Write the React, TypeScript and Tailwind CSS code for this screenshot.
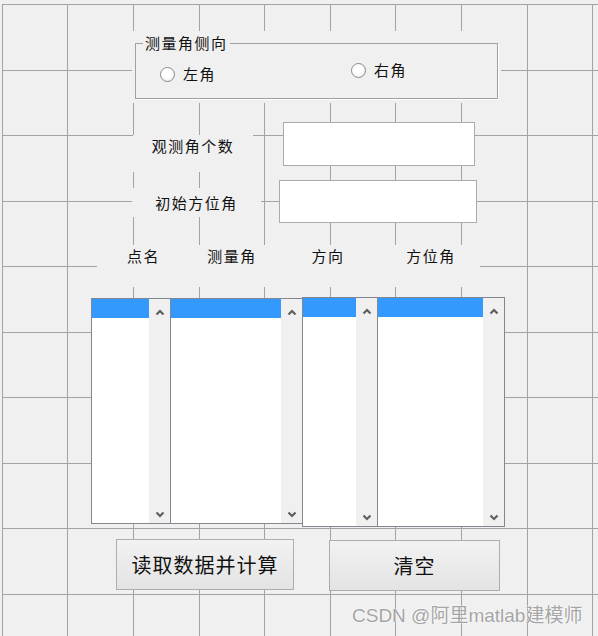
import React from "react";

const GRID_X = [2, 67, 133, 199, 264, 330, 395, 461, 527, 592];
const GRID_Y = [4, 70, 135, 201, 266, 332, 397, 463, 528, 594];

const CJK = "font-['Noto_Sans_CJK_SC','Noto_Sans',sans-serif]";
const LABEL = "text-[15px] leading-[18px] tracking-[1.5px] text-[#111]";

// GUIDE-style grid behind the controls
function GridBackground() {
  return (
    <svg className="absolute inset-0" width={598} height={636}>
      {GRID_X.map((x) => (
        <line key={"x" + x} x1={x + 0.5} y1={GRID_Y[0]} x2={x + 0.5} y2={636} stroke="#a3a3a3" strokeWidth={1} />
      ))}
      {GRID_Y.map((y) => (
        <line key={"y" + y} x1={GRID_X[0]} y1={y + 0.5} x2={598} y2={y + 0.5} stroke="#a3a3a3" strokeWidth={1} />
      ))}
    </svg>
  );
}

function Radio({ label }: { label: string }) {
  return (
    <div className="flex items-center gap-[8px]">
      <span className="w-[15px] h-[15px] rounded-full border border-[#8a8a8a] bg-[radial-gradient(circle_at_40%_35%,#ffffff_40%,#e6e6e6)]" />
      <span className={LABEL}>{label}</span>
    </div>
  );
}

function Chevron({ up }: { up?: boolean }) {
  return (
    <svg width="10" height="7" viewBox="0 0 10 7">
      <path
        d={up ? "M1.5 5.5 L5 2 L8.5 5.5" : "M1.5 1.5 L5 5 L8.5 1.5"}
        fill="none"
        stroke="#5f5f5f"
        strokeWidth={2.2}
      />
    </svg>
  );
}

function ListBox({ className }: { className: string }) {
  return (
    <div className={"flex shrink-0 border border-[#828790] bg-white " + className}>
      <div className="flex-1 flex flex-col">
        <div className="h-[19px] bg-[#3399ff]" />
      </div>
      <div className="w-[21px] bg-[#f0f0f0] flex flex-col items-center justify-between pt-[10px] pb-[5px]">
        <Chevron up />
        <Chevron />
      </div>
    </div>
  );
}

function PushButton({ label, className }: { label: string; className: string }) {
  return (
    <button className={"h-[51px] shrink-0 border border-[#adadad] bg-[linear-gradient(#f2f2f2,#e3e3e3)] text-[20px] tracking-[1px] text-[#111] " + className}>
      {label}
    </button>
  );
}

export default function App() {
  return (
    <div className={"relative w-[598px] h-[636px] overflow-hidden bg-[#f0f0f0] " + CJK}>
      <GridBackground />

      {/* controls layer */}
      <div className="absolute inset-0 flex flex-col">
        {/* 测量角侧向 button group */}
        <div className="mt-[31px] ml-[132px] w-[369px] h-[72px] bg-[#f0f0f0] pt-[12px] pl-[3px]">
          <div className="relative w-[363px] h-[56px] border border-[#a0a0a0] shadow-[1px_1px_0_#ffffff] flex items-start">
            <span className={"absolute left-[7px] top-[-10px] bg-[#f0f0f0] px-[2px] " + LABEL}>测量角侧向</span>
            <div className="mt-[21px] ml-[24px] w-[191px]">
              <Radio label="左角" />
            </div>
            <div className="mt-[17px]">
              <Radio label="右角" />
            </div>
          </div>
        </div>

        {/* 观测角个数 */}
        <div className="mt-[19px] ml-[133px] flex items-start gap-[30px]">
          <div className="mt-[13px] w-[120px] h-[37px] bg-[#f0f0f0] flex justify-center pt-[2px]">
            <span className={LABEL}>观测角个数</span>
          </div>
          <div className="w-[192px] h-[44px] bg-white border border-[#ababab]" />
        </div>

        {/* 初始方位角 */}
        <div className="mt-[8px] ml-[132px] flex items-start gap-[18px]">
          <div className="mt-[8px] w-[129px] h-[29px] bg-[#f0f0f0] flex justify-center items-center">
            <span className={LABEL}>初始方位角</span>
          </div>
          <div className="w-[198px] h-[43px] bg-white border border-[#ababab]" />
        </div>

        {/* column headers */}
        <div className={"mt-[22px] ml-[97px] w-[383px] h-[42px] bg-[#f0f0f0] flex pt-[2px] " + LABEL}>
          <span className="w-[93px] text-center">点名</span>
          <span className="w-[84px] text-center">测量角</span>
          <span className="w-[108px] text-center">方向</span>
          <span className="w-[98px] text-center">方位角</span>
        </div>

        {/* list boxes */}
        <div className="mt-[10px] ml-[91px] flex items-start">
          <ListBox className="mt-[1px] w-[80px] h-[226px]" />
          <ListBox className="mt-[1px] -ml-px w-[133px] h-[226px]" />
          <ListBox className="-ml-px relative w-[76px] h-[230px]" />
          <ListBox className="-ml-px w-[128px] h-[230px]" />
        </div>

        {/* buttons */}
        <div className="mt-[12px] ml-[116px] flex items-start gap-[35px]">
          <PushButton label="读取数据并计算" className="w-[178px]" />
          <PushButton label="清空" className="mt-[1px] w-[171px]" />
        </div>
      </div>

      {/* watermark */}
      <div className="absolute left-[352px] top-[603px] text-[19px] leading-[26px] text-[#a5a5a5] whitespace-nowrap [text-shadow:0_0_2px_#ffffff,0_0_1px_#ffffff] font-['Liberation_Sans','Noto_Sans_CJK_SC',sans-serif]">
        CSDN @阿里matlab建模师
      </div>
    </div>
  );
}
